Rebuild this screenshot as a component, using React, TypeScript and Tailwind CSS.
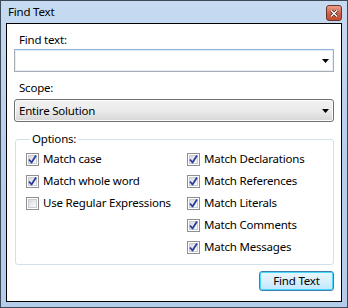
import React from "react";

const font = { fontFamily: '"Noto Sans", "Open Sans", sans-serif' };

function Check({ checked }: { checked: boolean }) {
  return (
    <span className="relative flex h-[13px] w-[13px] shrink-0 items-center justify-center border border-[#8f8f8f] bg-white">
      <span className="flex h-[9px] w-[9px] items-center justify-center border border-[#c9ccd0] bg-gradient-to-br from-[#d9dadc] to-[#fbfbfb]">
        {checked && (
          <svg width="9" height="9" viewBox="0 0 9 9" className="overflow-visible">
            <path d="M1 4.5 L3.5 7.5 L8 0.5" fill="none" stroke="#2b3a9c" strokeWidth="1.8" strokeLinejoin="round" />
          </svg>
        )}
      </span>
    </span>
  );
}

function Row({ label, checked }: { label: string; checked: boolean }) {
  return (
    <div className="flex h-[22px] items-center gap-[4px]">
      <Check checked={checked} />
      <span className="text-[11.5px] leading-none tracking-[-0.2px] text-black">{label}</span>
    </div>
  );
}

function Arrow() {
  return (
    <svg width="7" height="4" viewBox="0 0 7 4">
      <path d="M0 0 H7 L3.5 4 Z" fill="#000" />
    </svg>
  );
}

export default function App() {
  return (
    <div style={font} className="h-[308px] w-[348px] border border-[#3c4a5a] bg-gradient-to-b from-[#c6dbf1] via-[#b6cfec] to-[#b3cdea] px-[5px] pb-[5px] flex flex-col">
      <div className="flex h-[22px] items-center justify-between pl-[2px]">
        <span className="text-[11.5px] tracking-[-0.2px] text-black">Find Text</span>
        <div className="mt-[2px] flex h-[16px] w-[16px] items-center justify-center rounded-[3px] border border-[#6f3328] bg-gradient-to-b from-[#e9a18f] via-[#d0634a] to-[#c24a30]">
          <svg width="8" height="7" viewBox="0 0 8 7">
            <path d="M1 0.5 L7 6.5 M7 0.5 L1 6.5" stroke="#3b2520" strokeWidth="2.6" />
            <path d="M1 0.5 L7 6.5 M7 0.5 L1 6.5" stroke="#fff" strokeWidth="1.4" />
          </svg>
        </div>
      </div>
      <div className="flex flex-1 flex-col border border-black bg-white px-[7px] pt-[8px]">
        <div className="h-[17px] pl-[5px] text-[11.5px] leading-[15px] tracking-[-0.2px] text-black">Find text:</div>
        <div className="flex h-[23px] items-center justify-end border border-[#abadb3] border-t-[#8fb3d6] pr-[4px] shadow-[inset_0_0_0_1px_#e3eefa]">
          <Arrow />
        </div>
        <div className="mt-[8px] h-[19px] pl-[5px] text-[11.5px] leading-[15px] tracking-[-0.2px] text-black">Scope:</div>
        <div className="flex h-[23px] items-center justify-between rounded-[3px] border border-[#707070] bg-gradient-to-b from-[#f2f2f2] via-[#ebebeb] to-[#d6d6d6] pl-[4px] pr-[4px] shadow-[inset_0_0_0_1px_#fcfcfc]">
          <span className="text-[11.5px] tracking-[-0.2px] text-black">Entire Solution</span>
          <Arrow />
        </div>
        <fieldset className="mt-[10px] ml-[1px] rounded-[3px] border border-[#d5dfe5] pl-[10px] pb-[6px] pt-[2px]">
          <legend className="ml-[4px] px-[2px] text-[11.5px] leading-[14px] tracking-[-0.2px] text-black">Options:</legend>
          <div className="grid grid-cols-[161px_1fr]">
            <div className="flex flex-col">
              <Row label="Match case" checked />
              <Row label="Match whole word" checked />
              <Row label="Use Regular Expressions" checked={false} />
            </div>
            <div className="flex flex-col">
              <Row label="Match Declarations" checked />
              <Row label="Match References" checked />
              <Row label="Match Literals" checked />
              <Row label="Match Comments" checked />
              <Row label="Match Messages" checked />
            </div>
          </div>
        </fieldset>
        <div className="mt-[6px] flex justify-end">
          <button className="h-[20px] w-[75px] rounded-[3px] border border-[#3c7fb1] bg-gradient-to-b from-[#eaf6fd] via-[#d9f0fc] to-[#bee6fd] text-[11.5px] leading-none tracking-[-0.2px] text-black shadow-[inset_0_0_0_1px_#48d8fb]">
            Find Text
          </button>
        </div>
      </div>
    </div>
  );
}
